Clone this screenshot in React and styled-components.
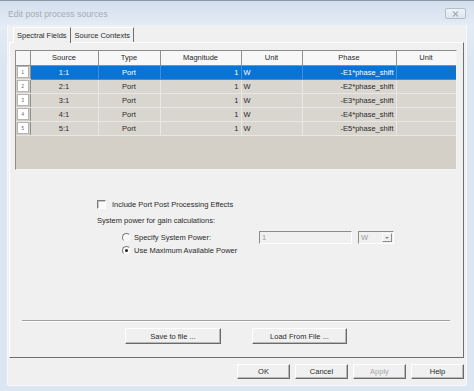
import React from "react";
import styled, { createGlobalStyle } from "styled-components";

const GlobalStyle = createGlobalStyle`
  html, body {
    margin: 0;
    padding: 0;
  }
  body {
    width: 474px;
    height: 391px;
    overflow: hidden;
    background: #dae6f2;
    font-family: "Liberation Sans", Arial, sans-serif;
  }
`;

const Window = styled.div`
  width: 474px;
  height: 391px;
  box-sizing: border-box;
  display: flex;
  flex-direction: column;
  padding: 0 8px 6px 8px;
  border-top: 1px solid #8d98a3;
  background: linear-gradient(#d2dfed 0px, #e4ecf5 24px, #dbe6f2 60px, #dbe6f2 100%);
`;

const TitleBar = styled.div`
  height: 24px;
  display: flex;
  align-items: flex-start;
  justify-content: space-between;
`;

const Title = styled.div`
  margin-top: 8px;
  font-family: "Liberation Sans", Arial, sans-serif;
  font-size: 8.7px;
  color: #a2acb6;
`;

const CloseBtn = styled.div`
  width: 21px;
  height: 11px;
  margin-top: 7px;
  box-sizing: border-box;
  border: 1px solid #b3bec9;
  border-radius: 2px;
  background: linear-gradient(#eef3f8, #dde6ef);
  display: flex;
  align-items: center;
  justify-content: center;
`;

const Client = styled.div`
  flex: 1;
  display: flex;
  flex-direction: column;
  background: #f0f0f0;
  padding: 2px 2px 6px 1px;
  box-shadow: -1px 0 0 #f6f9fc, 1px 0 0 #f6f9fc, 0 1px 0 #f6f9fc;
`;

const TabStrip = styled.div`
  height: 15px;
  display: flex;
  padding-left: 4px;
  position: relative;
  z-index: 1;
`;

const Tab = styled.div`
  box-sizing: border-box;
  padding: 0 3px;
  display: flex;
  align-items: center;
  font-size: 7.5px;
  color: #2a2a2a;
  background: #f0f0f0;
  border-right: 1px solid #6f6f6f;
  border-left: ${(p) => (p.$active ? "1px solid #fff" : "none")};
  border-top: 1px solid #fff;
  margin-bottom: ${(p) => (p.$active ? "-1px" : "0")};
  height: ${(p) => (p.$active ? "16px" : "15px")};
  margin-left: ${(p) => (p.$active ? "0" : "1px")};
`;

const Panel = styled.div`
  height: 316px;
  box-sizing: border-box;
  display: flex;
  flex-direction: column;
  border: 1px solid;
  border-color: #fff #6f6f6f #6f6f6f #fff;
  padding: 7px 6px 13px 5px;
`;

const GridBox = styled.div`
  width: 442px;
  height: 120px;
  box-sizing: border-box;
  background: #d4d0c8;
  border: 1px solid;
  border-color: #8c8c8c #f4f4f4 #f4f4f4 #8c8c8c;
  overflow: hidden;
`;

const Table = styled.table`
  border-collapse: collapse;
  table-layout: fixed;
  width: 440px;
  font-size: 7.5px;
  color: #2a2a2a;
`;

const HeadCell = styled.th`
  height: 14px;
  padding: 0;
  font-weight: normal;
  text-align: center;
  background: #f7f7f7;
  border-right: 1px solid #8f8f8f;
  border-bottom: 1px solid #8f8f8f;
  box-sizing: border-box;
`;

const RowHead = styled.td`
  height: 13px;
  padding: 0;
  background: #d4d0c8;
  border-right: 1px solid #8f8f8f;
  border-bottom: 1px solid #e8e6e3;
`;

const RowNum = styled.div`
  margin: 0 1px;
  height: 12px;
  box-sizing: border-box;
  background: #fff;
  border: 1px solid #b4b4b4;
  font-size: 4.5px;
  color: #666;
  display: flex;
  align-items: center;
  justify-content: center;
`;

const Cell = styled.td`
  height: 13px;
  padding: 0 2px;
  text-align: ${(p) => p.$align || "center"};
  white-space: nowrap;
  overflow: hidden;
  background: ${(p) => (p.$selected ? "#0b73d3" : "#d9d5cf")};
  color: ${(p) => (p.$selected ? "#fff" : "#2a2a2a")};
  border-right: 1px solid ${(p) => (p.$selected ? "#3d8fdc" : "#e9e7e4")};
  border-bottom: 1px solid ${(p) => (p.$selected ? "#3d8fdc" : "#e9e7e4")};
`;

const Options = styled.div`
  margin-top: 29px;
  padding-left: 82px;
  display: flex;
  flex-direction: column;
  font-size: 7.5px;
  color: #2a2a2a;
`;

const OptRow = styled.div`
  display: flex;
  align-items: center;
  height: ${(p) => p.$h || 13}px;
  margin-top: ${(p) => p.$mt || 0}px;
  padding-left: ${(p) => p.$indent || 0}px;
  gap: ${(p) => p.$gap || 4}px;
`;

const CheckBox = styled.span`
  width: 9px;
  height: 9px;
  box-sizing: border-box;
  background: #fafafa;
  border: 1px solid;
  border-color: #7a7a7a #fff #fff #7a7a7a;
  box-shadow: inset 1px 1px 0 #c8c8c8;
  margin-right: 2px;
`;

const Radio = styled.span`
  width: 9px;
  height: 9px;
  box-sizing: border-box;
  border-radius: 50%;
  background: #fafafa;
  border: 1px solid;
  border-color: #7a7a7a #f4f4f4 #f4f4f4 #7a7a7a;
  display: flex;
  align-items: center;
  justify-content: center;
  &::after {
    content: "";
    width: 3px;
    height: 3px;
    border-radius: 50%;
    background: ${(p) => (p.$checked ? "#222" : "transparent")};
  }
`;

const RadioLabel = styled.span`
  width: ${(p) => (p.$w ? p.$w + "px" : "auto")};
`;

const TextField = styled.div`
  width: 93px;
  height: 13px;
  box-sizing: border-box;
  border: 1px solid;
  border-color: #8c8c8c #fff #fff #8c8c8c;
  background: #f0f0f0;
  color: #9a9a9a;
  padding-left: 2px;
  display: flex;
  align-items: center;
`;

const SelectBox = styled.div`
  width: 36px;
  height: 13px;
  margin-left: 3px;
  box-sizing: border-box;
  border: 1px solid;
  border-color: #8c8c8c #fff #fff #8c8c8c;
  background: #f0f0f0;
  color: #9a9a9a;
  display: flex;
  align-items: center;
  justify-content: space-between;
  padding-left: 2px;
`;

const DropBtn = styled.span`
  width: 10px;
  height: 9px;
  margin-right: 1px;
  box-sizing: border-box;
  border: 1px solid;
  border-color: #fff #8c8c8c #8c8c8c #fff;
  display: flex;
  align-items: center;
  justify-content: center;
  &::after {
    content: "";
    border-left: 2px solid transparent;
    border-right: 2px solid transparent;
    border-top: 2px solid #8a8a8a;
  }
`;

const Spacer = styled.div`
  flex: 1;
`;

const Separator = styled.div`
  margin: 0 7px;
  height: 1px;
  background: #a0a0a0;
  border-bottom: 1px solid #fff;
`;

const FileRow = styled.div`
  margin-top: 6px;
  display: flex;
  justify-content: center;
  gap: 31px;
`;

const Button = styled.div`
  width: ${(p) => p.$w || 53}px;
  height: ${(p) => p.$h || 15}px;
  box-sizing: border-box;
  border: 1px solid;
  border-color: #fff #6a6a6a #6a6a6a #fff;
  box-shadow: inset -1px -1px 0 #b8b8b8;
  background: #f0f0f0;
  display: flex;
  align-items: center;
  justify-content: center;
  font-size: 7.5px;
  color: ${(p) => (p.$disabled ? "#a8a8a8" : "#2a2a2a")};
`;

const ButtonRow = styled.div`
  margin-top: 6px;
  display: flex;
  justify-content: flex-end;
  gap: 5px;
`;

const rows = [1, 2, 3, 4, 5];
const cols = [14, 68, 62, 81, 61, 94, 60];

export default function App() {
  return (
    <>
      <GlobalStyle />
      <Window>
        <TitleBar>
          <Title>Edit post process sources</Title>
          <CloseBtn>
            <svg width="7" height="6" viewBox="0 0 7 6">
              <path d="M1 0.5 L6 5.5 M6 0.5 L1 5.5" stroke="#a4aeb8" strokeWidth="1.2" />
            </svg>
          </CloseBtn>
        </TitleBar>
        <Client>
          <TabStrip>
            <Tab $active>Spectral Fields</Tab>
            <Tab>Source Contexts</Tab>
          </TabStrip>
          <Panel>
            <GridBox>
              <Table>
                <colgroup>
                  {cols.map((w, i) => (
                    <col key={i} style={{ width: w }} />
                  ))}
                </colgroup>
                <thead>
                  <tr>
                    <HeadCell />
                    <HeadCell>Source</HeadCell>
                    <HeadCell>Type</HeadCell>
                    <HeadCell>Magnitude</HeadCell>
                    <HeadCell>Unit</HeadCell>
                    <HeadCell>Phase</HeadCell>
                    <HeadCell>Unit</HeadCell>
                  </tr>
                </thead>
                <tbody>
                  {rows.map((n) => {
                    const sel = n === 1;
                    return (
                      <tr key={n}>
                        <RowHead>
                          <RowNum>{n}</RowNum>
                        </RowHead>
                        <Cell $selected={sel}>{n}:1</Cell>
                        <Cell $selected={sel}>Port</Cell>
                        <Cell $selected={sel} $align="right">1</Cell>
                        <Cell $selected={sel} $align="left">W</Cell>
                        <Cell $selected={sel} $align="right">-E{n}*phase_shift</Cell>
                        <Cell $selected={sel} />
                      </tr>
                    );
                  })}
                </tbody>
              </Table>
            </GridBox>
            <Options>
              <OptRow $h={11}>
                <CheckBox />
                <span>Include Port Post Processing Effects</span>
              </OptRow>
              <OptRow $h={11} $mt={5}>
                <span>System power for gain calculations:</span>
              </OptRow>
              <OptRow $mt={5} $indent={25} $gap={3}>
                <Radio />
                <RadioLabel $w={122}>Specify System Power:</RadioLabel>
                <TextField>1</TextField>
                <SelectBox>
                  W
                  <DropBtn />
                </SelectBox>
              </OptRow>
              <OptRow $indent={25} $gap={3}>
                <Radio $checked />
                <RadioLabel>Use Maximum Available Power</RadioLabel>
              </OptRow>
            </Options>
            <Spacer />
            <Separator />
            <FileRow>
              <Button $w={96} $h={16}>Save to file ...</Button>
              <Button $w={95} $h={16}>Load From File ...</Button>
            </FileRow>
          </Panel>
          <ButtonRow>
            <Button>OK</Button>
            <Button>Cancel</Button>
            <Button $disabled>Apply</Button>
            <Button>Help</Button>
          </ButtonRow>
        </Client>
      </Window>
    </>
  );
}
